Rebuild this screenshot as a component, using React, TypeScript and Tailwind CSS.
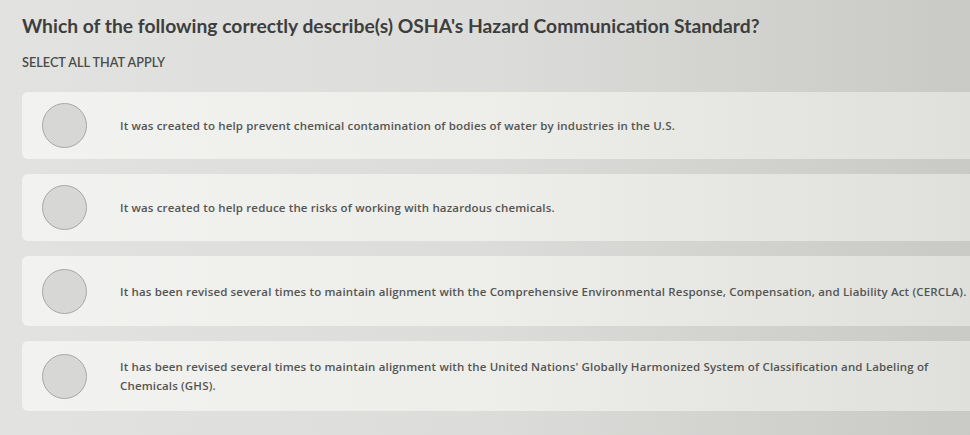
const choices = [
  "It was created to help prevent chemical contamination of bodies of water by industries in the U.S.",
  "It was created to help reduce the risks of working with hazardous chemicals.",
  "It has been revised several times to maintain alignment with the Comprehensive Environmental Response, Compensation, and Liability Act (CERCLA).",
  "It has been revised several times to maintain alignment with the United Nations' Globally Harmonized System of Classification and Labeling of Chemicals (GHS).",
];

export default function App() {
  return (
    <div className="w-[970px] h-[435px] overflow-hidden bg-gradient-to-r from-[#e2e3e1] via-[#dcddda] to-[#c9cac6] pl-[22px] pt-[12px] font-['Lato','Open_Sans',sans-serif]">
      <h1 className="text-[19.3px] leading-[28px] font-bold text-[#3d3e3d]">
        Which of the following correctly describe(s) OSHA's Hazard Communication Standard?
      </h1>
      <p className="mt-[14px] text-[12.7px] leading-[16px] font-semibold uppercase text-[#4a4b4a]">
        Select all that apply
      </p>

      <div className="mt-[22px] flex flex-col gap-[15px]">
        {choices.map((text, i) => (
          <div
            key={i}
            className={`flex items-center w-[960px] rounded-l-[6px] bg-gradient-to-r from-[#f2f2f0] via-[#ededea] to-[#dfe0dc] pl-[20px] ${
              i < 2 ? "h-[67px]" : "h-[70px]"
            }`}
          >
            <div className="shrink-0 w-[45px] h-[45px] rounded-full bg-[#d7d8d6] border-[1.5px] border-[#a8a9a7]" />
            <p className="ml-[33px] max-w-[860px] font-['Open_Sans',sans-serif] text-[11.5px] leading-[19px] tracking-[0.15px] font-semibold text-[#545553]">
              {text}
            </p>
          </div>
        ))}
      </div>
    </div>
  );
}
